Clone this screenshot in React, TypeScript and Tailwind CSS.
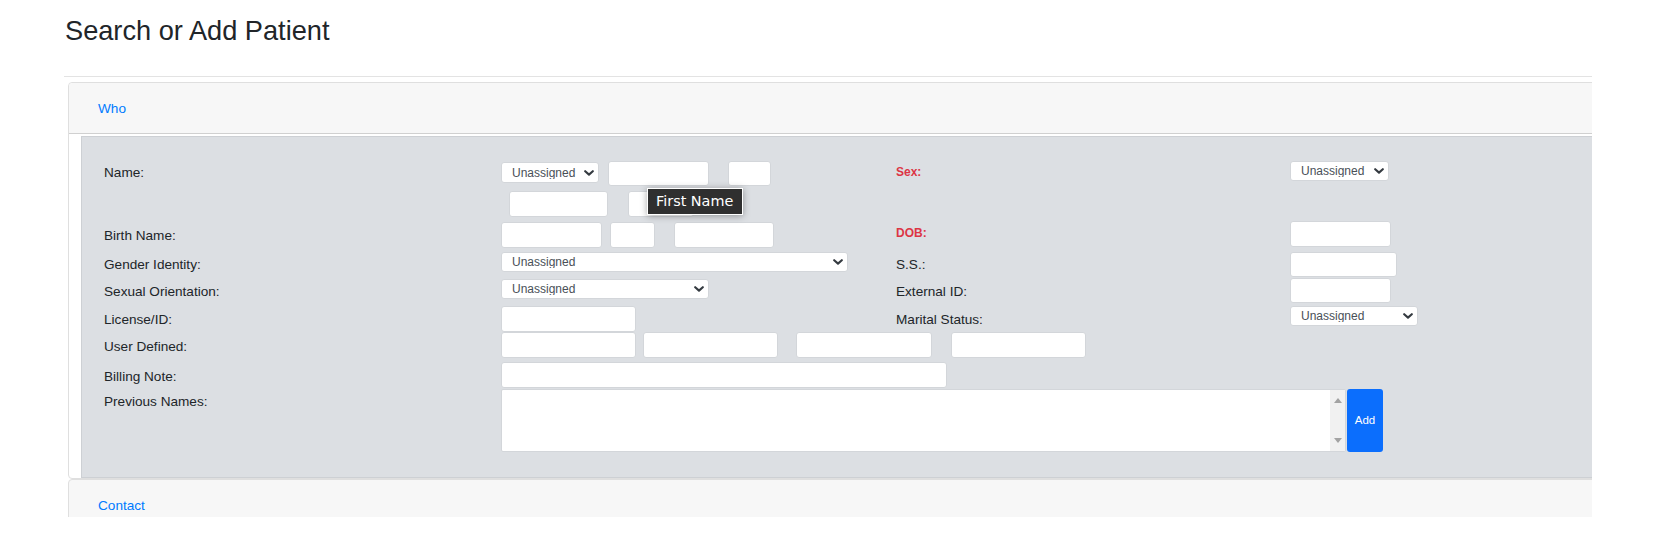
import React from "react";

function Chevron() {
  return (
    <svg
      width="10"
      height="6"
      viewBox="0 0 10 6"
      className="pointer-events-none absolute right-[5px] top-1/2 -translate-y-1/2"
      aria-hidden
    >
      <path d="M1.2 1.2L5 4.6l3.8-3.4" fill="none" stroke="#343a40" strokeWidth="2.1" strokeLinecap="round" strokeLinejoin="round" />
    </svg>
  );
}

function Select({ className }: { className: string }) {
  return (
    <div className={`relative shrink-0 ${className}`}>
      <select
        defaultValue="u"
        className="block h-full w-full appearance-none rounded-[3px] border border-[#d3d6da] bg-white pl-[10px] text-[12px] leading-none text-[#495057] outline-none"
      >
        <option value="u">Unassigned</option>
      </select>
      <Chevron />
    </div>
  );
}

function Field({ className }: { className: string }) {
  return <input type="text" className={`block shrink-0 rounded-[3px] border border-[#d3d6da] bg-white outline-none ${className}`} />;
}

function Label({ children, className = "" }: { children: React.ReactNode; className?: string }) {
  return <div className={`shrink-0 text-[13.6px] leading-[20px] text-[#212529] ${className}`}>{children}</div>;
}

function Required({ children, className = "" }: { children: React.ReactNode; className?: string }) {
  return <div className={`w-[394px] shrink-0 text-[12px] font-bold leading-[20px] text-[#dc3545] ${className}`}>{children}</div>;
}

export default function App() {
  return (
    <div className="h-[547px] w-full overflow-hidden bg-white font-['Liberation_Sans',Arial,Helvetica,sans-serif] text-[#212529]">
      <h1 className="pl-[65px] pt-[15px] text-[27.2px] font-normal leading-[32px]">Search or Add Patient</h1>

      <div className="ml-[64px] mt-[29px] h-[441px] w-[1528px] overflow-hidden">
        <div className="h-px bg-[#e3e3e3]" />

        {/* Who */}
        <div className="ml-[4px] mt-[5px] w-[1600px] rounded-[4px] border border-[#dfdfdf] bg-white">
          <div className="rounded-t-[4px] border-b border-[#d0d0d0] bg-[#f7f7f7] pb-[14px] pl-[29px] pt-[16px] text-[13.6px] leading-[20px] text-[#007bff]">
            Who
          </div>
          <div className="pt-[2px] pl-[12px]">
            <div className="border-b border-l border-t border-[#cdd0d4] bg-[#dcdfe3] pb-[25px] pl-[22px] pt-[24px]">
              {/* Name / Sex */}
              <div className="flex h-[59px] items-start">
                <Label className="w-[397px] pt-[2px]">Name:</Label>
                <div className="relative w-[395px] shrink-0">
                  <div className="flex items-start">
                    <Select className="mt-[1px] h-[21px] w-[98px]" />
                    <Field className="ml-[9px] h-[25px] w-[101px]" />
                    <Field className="ml-[19px] h-[25px] w-[43px]" />
                  </div>
                  <div className="ml-[8px] mt-[5px] flex">
                    <Field className="h-[26px] w-[99px]" />
                    <Field className="ml-[20px] h-[26px] w-[66px]" />
                  </div>
                  <div className="absolute left-[146px] top-[27px] z-10 flex h-[27px] w-[96px] items-center border border-white bg-[#2f2f2f] pl-[8px] font-['DejaVu_Sans',sans-serif] text-[14.4px] text-white shadow-[0_1px_7px_rgba(0,0,0,0.35)]">
                    First Name
                  </div>
                </div>
                <Required className="pt-[1px]">Sex:</Required>
                <Select className="h-[20px] w-[99px]" />
              </div>

              {/* Birth Name / DOB */}
              <div className="flex h-[31px] items-start">
                <Label className="mt-[6px] w-[397px]">Birth Name:</Label>
                <div className="mt-[2px] flex w-[395px] shrink-0">
                  <Field className="h-[26px] w-[101px]" />
                  <Field className="ml-[8px] h-[26px] w-[45px]" />
                  <Field className="ml-[19px] h-[26px] w-[100px]" />
                </div>
                <Required className="mt-[3px]">DOB:</Required>
                <Field className="mt-[1px] h-[26px] w-[101px]" />
              </div>

              {/* Gender Identity / S.S. */}
              <div className="flex h-[27px] items-start">
                <Label className="mt-[4px] w-[397px]">Gender Identity:</Label>
                <div className="mt-[1px] w-[395px] shrink-0">
                  <Select className="h-[20px] w-[347px]" />
                </div>
                <Label className="mt-[4px] w-[394px]">S.S.:</Label>
                <Field className="mt-[1px] h-[25px] w-[107px]" />
              </div>

              {/* Sexual Orientation / External ID */}
              <div className="flex h-[27px] items-start">
                <Label className="mt-[4px] w-[397px]">Sexual Orientation:</Label>
                <div className="mt-[1px] w-[395px] shrink-0">
                  <Select className="h-[20px] w-[208px]" />
                </div>
                <Label className="mt-[4px] w-[394px]">External ID:</Label>
                <Field className="h-[25px] w-[101px]" />
              </div>

              {/* License / Marital Status */}
              <div className="flex h-[27px] items-start">
                <Label className="mt-[5px] w-[397px]">License/ID:</Label>
                <div className="mt-[1px] w-[395px] shrink-0">
                  <Field className="h-[26px] w-[135px]" />
                </div>
                <Label className="mt-[5px] w-[394px]">Marital Status:</Label>
                <Select className="mt-[1px] h-[20px] w-[128px]" />
              </div>

              {/* User Defined */}
              <div className="flex h-[30px] items-start">
                <Label className="mt-[5px] w-[397px]">User Defined:</Label>
                <Field className="h-[26px] w-[135px]" />
                <Field className="ml-[7px] h-[26px] w-[135px]" />
                <Field className="ml-[18px] h-[26px] w-[136px]" />
                <Field className="ml-[19px] h-[26px] w-[135px]" />
              </div>

              {/* Billing Note */}
              <div className="flex h-[27px] items-start">
                <Label className="mt-[5px] w-[397px]">Billing Note:</Label>
                <Field className="h-[26px] w-[446px]" />
              </div>

              {/* Previous Names */}
              <div className="flex h-[63px] items-start">
                <Label className="mt-[3px] w-[397px]">Previous Names:</Label>
                <div className="flex h-[63px] w-[845px] shrink-0 overflow-hidden rounded-[2px] border border-[#d3d6da] bg-white">
                  <textarea className="h-full flex-1 resize-none bg-transparent outline-none" />
                  <div className="flex w-[15px] flex-col items-center justify-between bg-[#f1f1f1] py-[8px]">
                    <svg width="8" height="5" viewBox="0 0 8 5" aria-hidden>
                      <path d="M0 5L4 0l4 5z" fill="#a3a3a3" />
                    </svg>
                    <svg width="8" height="5" viewBox="0 0 8 5" aria-hidden>
                      <path d="M0 0l4 5 4-5z" fill="#a3a3a3" />
                    </svg>
                  </div>
                </div>
                <button className="ml-px h-[63px] w-[36px] shrink-0 rounded-[3px] bg-[#0b6efd] text-[11.5px] text-white">
                  Add
                </button>
              </div>
            </div>
          </div>
        </div>

        {/* Contact */}
        <div className="ml-[4px] w-[1600px] rounded-[4px] border border-[#dfdfdf] bg-[#f7f7f7]">
          <div className="h-[60px] pl-[29px] pt-[16px] text-[13.6px] leading-[20px] text-[#007bff]">Contact</div>
        </div>
      </div>
    </div>
  );
}
